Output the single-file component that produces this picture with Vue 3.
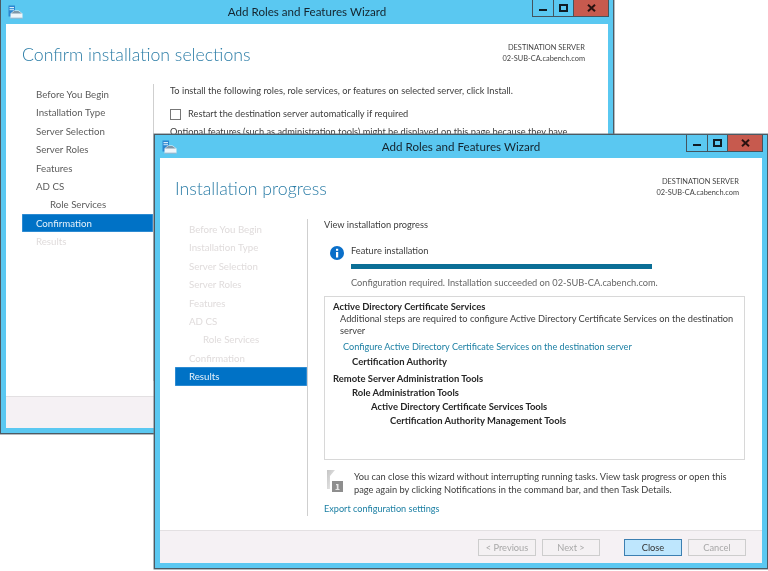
<script setup>
const steps = [
  { t: 'Before You Begin' }, { t: 'Installation Type' }, { t: 'Server Selection' },
  { t: 'Server Roles' }, { t: 'Features' }, { t: 'AD CS' },
  { t: 'Role Services', sub: true }, { t: 'Confirmation' }, { t: 'Results' },
]
const windows = [
  { id: 'back', heading: 'Confirm installation selections', active: 'Confirmation', enabledUpTo: 7 },
  { id: 'front', heading: 'Installation progress', active: 'Results', enabledUpTo: -1 },
]
</script>

<template>
  <div class="desktop">
    <section v-for="w in windows" :key="w.id" class="window" :class="w.id">
      <header class="titlebar">
        <svg class="appicon" width="15" height="14" viewBox="0 0 15 14">
          <rect x="0.5" y="0.5" width="6.5" height="11" fill="#2b86cf" />
          <rect x="1.5" y="2" width="4.5" height="1.2" fill="#d5ecfb" />
          <rect x="1.5" y="4.2" width="4.5" height="1" fill="#d5ecfb" />
          <path d="M2.5 8.5 L6 5.6 H10.5 L14.5 8.5 V13.5 H2.5 Z" fill="#eef5fa" />
          <path d="M3 8.5 L6.2 6 H10.3 L14 8.5 Z" fill="#7f97a8" />
          <path d="M2.5 13.2 H14.5" stroke="#6f9ec0" stroke-width=".8" />
        </svg>
        <span class="title">Add Roles and Features Wizard</span>
        <div class="controls">
          <span class="ctl"><i class="min"></i></span>
          <span class="ctl second"><i class="max"></i></span>
          <span class="ctl close">
            <svg width="9" height="8" viewBox="0 0 9 8"><path d="M1 .8 L8 7.2 M8 .8 L1 7.2" stroke="#2a1210" stroke-width="2" /></svg>
          </span>
        </div>
      </header>

      <div class="client">
        <div class="top">
          <h1>{{ w.heading }}</h1>
          <div class="dest">DESTINATION SERVER<br />02-SUB-CA.cabench.com</div>
        </div>

        <div class="middle">
          <nav class="nav">
            <div
              v-for="(s, i) in steps"
              :key="s.t"
              class="step"
              :class="{ sub: s.sub, on: s.t === w.active, done: i < w.enabledUpTo }"
            >{{ s.t }}</div>
          </nav>

          <main v-if="w.id === 'back'" class="pane pane-back">
            <p>To install the following roles, role services, or features on selected server, click Install.</p>
            <label class="restart"><span class="check"></span>Restart the destination server automatically if required</label>
            <p>Optional features (such as administration tools) might be displayed on this page because they have</p>
          </main>

          <main v-else class="pane">
            <p class="lead">View installation progress</p>
            <div class="feature">
              <svg class="info" width="14" height="14" viewBox="0 0 14 14">
                <circle cx="7" cy="7" r="7" fill="#0a6fc9" />
                <rect x="6" y="6" width="2.2" height="5.5" fill="#fff" />
                <rect x="6" y="2.8" width="2.2" height="2" fill="#fff" />
              </svg>
              <div class="feature-body">
                <div class="feature-name">Feature installation</div>
                <div class="bar"></div>
                <div class="status">Configuration required. Installation succeeded on 02-SUB-CA.cabench.com.</div>
              </div>
            </div>

            <div class="results">
              <div class="b">Active Directory Certificate Services</div>
              <div class="note">Additional steps are required to configure Active Directory Certificate Services on the destination server</div>
              <a class="link cfg">Configure Active Directory Certificate Services on the destination server</a>
              <div class="b l1 ca">Certification Authority</div>
              <div class="b rsat">Remote Server Administration Tools</div>
              <div class="b l1 row">Role Administration Tools</div>
              <div class="b l2 row">Active Directory Certificate Services Tools</div>
              <div class="b l3 row">Certification Authority Management Tools</div>
            </div>

            <div class="hint">
              <svg class="flag" width="18" height="22" viewBox="0 0 18 22">
                <defs>
                  <linearGradient id="flagfill" x1="0" y1="0" x2="1" y2="1">
                    <stop offset="0" stop-color="#c4c4c4" />
                    <stop offset="1" stop-color="#f0f0f0" />
                  </linearGradient>
                </defs>
                <path d="M1 0 H9 L4 6 V19 H1 Z" fill="url(#flagfill)" />
                <rect x="6" y="11" width="11" height="11" fill="#8e8e8e" />
                <path d="M10 14 H12.5 V19 H13.5 V20 H9.5 V19 H10.8 V15.2 H10 Z" fill="#e6e6e6" />
              </svg>
              <p>You can close this wizard without interrupting running tasks. View task progress or open this page again by clicking Notifications in the command bar, and then Task Details.</p>
            </div>
            <a class="link export">Export configuration settings</a>
          </main>
        </div>

        <footer class="footer">
          <template v-if="w.id === 'front'">
            <button class="btn off">&lt; Previous</button>
            <button class="btn off">Next &gt;</button>
            <button class="btn primary gap">Close</button>
            <button class="btn off">Cancel</button>
          </template>
        </footer>
      </div>
    </section>
  </div>
</template>

<style>
html, body { margin: 0; background: #fff; }
</style>

<style scoped>
.desktop {
  position: relative;
  width: 768px;
  height: 571px;
  overflow: hidden;
  background: #fff;
  font-family: "Lato", "Open Sans", sans-serif;
  font-size: 9.25px;
  color: #444;
  filter: blur(0.3px);
}
.window {
  position: absolute;
  display: flex;
  flex-direction: column;
  box-sizing: border-box;
  width: 614px;
  height: 435px;
  background: #5ac8f1;
  border: 1px solid #4c5a63;
  box-shadow: 0 0 0 .5px #6b7880;
  padding: 0 5px 5px;
}
.back { left: 0; top: -1px; }
.front { left: 154px; top: 134px; }

.titlebar {
  position: relative;
  flex: none;
  height: 24px;
  display: flex;
  align-items: center;
  justify-content: center;
}
.front .titlebar { height: 23px; }
.appicon { position: absolute; left: 2px; top: 5px; }
.title { font-size: 11.6px; color: #14242e; margin-top: -2px; }
.front .title { margin-top: -1px; }
.controls {
  position: absolute;
  right: -1px;
  top: 0;
  display: flex;
  height: 17px;
  border: 1px solid #44545e;
  border-top: 0;
  box-sizing: border-box;
}
.ctl {
  width: 20px;
  display: flex;
  align-items: center;
  justify-content: center;
  border-right: 1px solid #44545e;
}
.ctl.second { width: 19px; }
.ctl.close { width: 34px; border-right: 0; background: #c75a4e; }
.min { display: block; width: 8px; height: 2px; margin-top: 3px; background: #101c24; }
.max { display: block; width: 5px; height: 4px; border: 2px solid #101c24; }

.client {
  flex: 1;
  display: flex;
  flex-direction: column;
  min-height: 0;
  background: #fff;
}
.top {
  flex: none;
  height: 60px;
  display: flex;
  justify-content: space-between;
  padding: 0 23px 0 16px;
  box-sizing: border-box;
}
.front .top { padding-left: 15px; height: 61px; }
h1 {
  margin: 18px 0 0;
  font-size: 17.7px;
  line-height: 26px;
  font-weight: 300;
  color: #2a7ca6;
}
.dest {
  margin-top: 19px;
  font-size: 7.4px;
  line-height: 10.5px;
  text-align: right;
  color: #444;
}
.middle { flex: 1; display: flex; min-height: 0; padding-left: 15px; }
.back .middle { padding-left: 16px; }
.nav { flex: none; width: 132px; padding-top: 1px; font-size: 9.7px; }
.back .nav { width: 131px; }
.step {
  height: 18.4px;
  line-height: 18.4px;
  padding-left: 14px;
  color: #e0dcdc;
}
.step.done { color: #5c5c5c; }
.step.sub { padding-left: 28px; }
.step.on {
  background: #0072c6;
  color: #e6f2fb;
  box-shadow: inset 0 0 0 .5px #5aa3de;
}
.pane {
  flex: 1;
  min-width: 0;
  padding-left: 16px;
  padding-right: 17px;
  border-left: 1px solid #cfcfcf;
  height: 297px;
  color: #3d3d3d;
}
.pane p { margin: 0; }
.pane-back { line-height: 12px; }
.pane-back p:first-child { margin-top: 1px; }
.restart { display: flex; align-items: center; height: 12px; margin: 11px 0 6px; }
.check {
  width: 9px;
  height: 9px;
  border: 1px solid #777;
  margin-right: 7px;
}
.lead { line-height: 12px; }
.feature { display: flex; margin: 14px 0 0 6px; }
.info { flex: none; margin-top: 1px; margin-right: 7px; }
.feature-name { line-height: 12px; }
.bar { width: 301px; height: 5px; margin-top: 7px; background: #0b6f96; }
.status { margin-top: 7px; line-height: 13px; color: #666; white-space: nowrap; }
.results {
  box-sizing: border-box;
  height: 164px;
  margin-top: 7px;
  border: 1px solid #d8d8d8;
  padding: 4px 8px 0;
  line-height: 12px;
}
.b { font-weight: 700; font-size: 9.45px; color: #262626; }
.note { margin-left: 7px; line-height: 12px; }
.link { color: #1b7fa3; display: block; font-size: 9.15px; }
.cfg { margin: 4px 0 0 10px; }
.l1 { margin-left: 19px; }
.l2 { margin-left: 38px; }
.l3 { margin-left: 57px; }
.ca { margin-top: 3px; }
.rsat { margin-top: 5px; }
.row { margin-top: 2px; }
.hint { display: flex; margin: 10px 0 0 2px; }
.flag { flex: none; margin-right: 10px; }
.hint p { line-height: 13px; color: #3d3d3d; }
.export { margin-top: 7px; line-height: 12px; }

.footer {
  flex: none;
  box-sizing: border-box;
  height: 33px;
  display: flex;
  align-items: center;
  justify-content: flex-end;
  gap: 6px;
  padding: 0 16px 0 0;
  background: #f5f1f4;
  border-top: 1px solid #e3e0e2;
}
.back .footer { height: 32px; }
.btn {
  width: 58px;
  height: 17px;
  box-sizing: border-box;
  padding: 0;
  font: inherit;
  line-height: 13px;
}
.btn.off { background: #f4f1f3; border: 1px solid #cdcdcd; color: #a8a8a8; }
.btn.primary { background: #bee6fd; border: 1px solid #3c7fb1; color: #333; }
.btn.gap { margin-left: 18px; }
</style>
